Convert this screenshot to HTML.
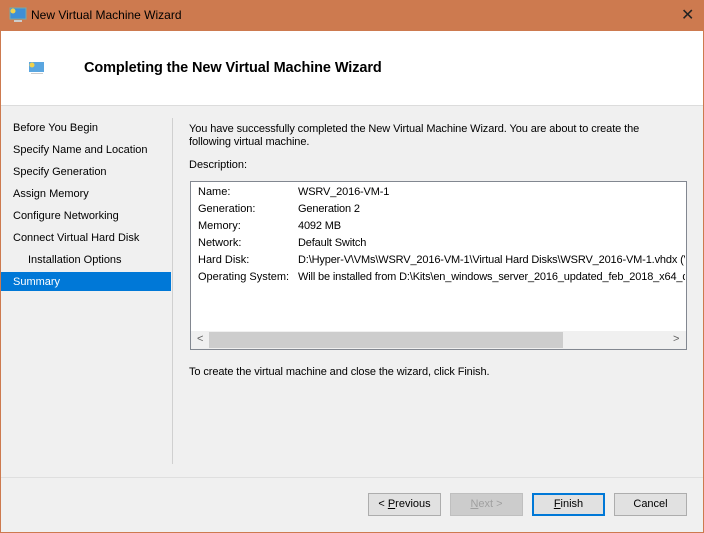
<!DOCTYPE html>
<html><head><style>
*{margin:0;padding:0;box-sizing:border-box}
body{width:704px;height:533px;overflow:hidden;font-family:"Liberation Sans",sans-serif;font-size:11px;color:#000;background:#f0f0f0;position:relative}
.abs{position:absolute}
#title{left:0;top:0;width:704px;height:31px;background:#cd7a4f}
#frame{left:0;top:0;width:704px;height:533px;border:1px solid #cd7a4f;pointer-events:none}
#hdr{left:1px;top:31px;width:702px;height:75px;background:#fff;border-bottom:1px solid #dcdcdc}
.nav{left:13px;font-size:11px}
.btn{top:493px;height:23px;width:73px;border:1px solid #adadad;background:#e1e1e1;text-align:center;line-height:21px;font-size:11px}
.lbl{left:198px}
.val{left:298px;white-space:nowrap;letter-spacing:-0.15px}
</style></head><body>
<div id="title" class="abs"></div>
<svg class="abs" style="left:9px;top:7px" width="18" height="16"><rect x="1" y="1" width="16" height="11" fill="#3d8fd6" stroke="#7aa" stroke-width="1"/><rect x="5" y="13" width="8" height="2" fill="#ccc"/><circle cx="4" cy="4" r="2.5" fill="#f2d24b"/></svg>
<div class="abs" style="left:31px;top:8px;font-size:12px;color:#000">New Virtual Machine Wizard</div>
<div class="abs" style="left:681px;top:5px;font-size:16px;color:#222">✕</div>
<div id="hdr" class="abs"></div>
<svg class="abs" style="left:28px;top:61px" width="18" height="14"><rect x="1" y="1" width="15" height="10" fill="#5aa6e0"/><circle cx="4" cy="4" r="2.5" fill="#f2d24b"/><rect x="3" y="12" width="12" height="1" fill="#ccc"/></svg>
<div class="abs" style="left:84px;top:60px;font-size:14.5px;font-weight:bold;letter-spacing:-0.1px">Completing the New Virtual Machine Wizard</div>
<div class="abs nav" style="top:122px">Before You Begin</div>
<div class="abs nav" style="top:144px">Specify Name and Location</div>
<div class="abs nav" style="top:166px">Specify Generation</div>
<div class="abs nav" style="top:188px">Assign Memory</div>
<div class="abs nav" style="top:210px">Configure Networking</div>
<div class="abs nav" style="top:232px">Connect Virtual Hard Disk</div>
<div class="abs nav" style="top:254px;left:28px">Installation Options</div>
<div class="abs" style="left:1px;top:272px;width:170px;height:19px;background:#0078d7"></div>
<div class="abs nav" style="top:276px;color:#fff">Summary</div>
<div class="abs" style="left:172px;top:118px;width:1px;height:346px;background:#d0d0d0"></div>
<div class="abs" style="left:189px;top:123px;width:480px;line-height:13px;letter-spacing:-0.1px">You have successfully completed the New Virtual Machine Wizard. You are about to create the following virtual machine.</div>
<div class="abs" style="left:189px;top:159px">Description:</div>
<div class="abs" style="left:190px;top:181px;width:497px;height:169px;background:#fff;border:1px solid #828790;overflow:hidden">
</div>
<div class="abs lbl" style="top:186px">Name:</div><div class="abs val" style="top:186px">WSRV_2016-VM-1</div>
<div class="abs lbl" style="top:203px">Generation:</div><div class="abs val" style="top:203px">Generation 2</div>
<div class="abs lbl" style="top:220px">Memory:</div><div class="abs val" style="top:220px">4092 MB</div>
<div class="abs lbl" style="top:237px">Network:</div><div class="abs val" style="top:237px">Default Switch</div>
<div class="abs lbl" style="top:254px">Hard Disk:</div><div class="abs val" style="top:254px;width:387px;overflow:hidden">D:\Hyper-V\VMs\WSRV_2016-VM-1\Virtual Hard Disks\WSRV_2016-VM-1.vhdx (VHDX)</div>
<div class="abs lbl" style="top:271px">Operating System:</div><div class="abs val" style="top:271px;width:387px;overflow:hidden">Will be installed from D:\Kits\en_windows_server_2016_updated_feb_2018_x64_dvd.iso</div>
<div class="abs" style="left:191px;top:331px;width:495px;height:18px;background:#f0f0f0"></div>
<div class="abs" style="left:209px;top:332px;width:354px;height:16px;background:#cdcdcd"></div>
<div class="abs" style="left:197px;top:333px;color:#606060;font-size:11px">&lt;</div>
<div class="abs" style="left:673px;top:333px;color:#606060;font-size:11px">&gt;</div>
<div class="abs" style="left:189px;top:366px;letter-spacing:-0.1px">To create the virtual machine and close the wizard, click Finish.</div>
<div class="abs" style="left:1px;top:477px;width:702px;height:1px;background:#dfdfdf"></div>
<div class="abs btn" style="left:368px">&lt; <u>P</u>revious</div>
<div class="abs btn" style="left:450px;background:#cccccc;border-color:#bfbfbf;color:#a0a0a0"><u>N</u>ext &gt;</div>
<div class="abs btn" style="left:532px;border:2px solid #0078d7;line-height:19px"><u>F</u>inish</div>
<div class="abs btn" style="left:614px">Cancel</div>
<div id="frame" class="abs"></div>
</body></html>
